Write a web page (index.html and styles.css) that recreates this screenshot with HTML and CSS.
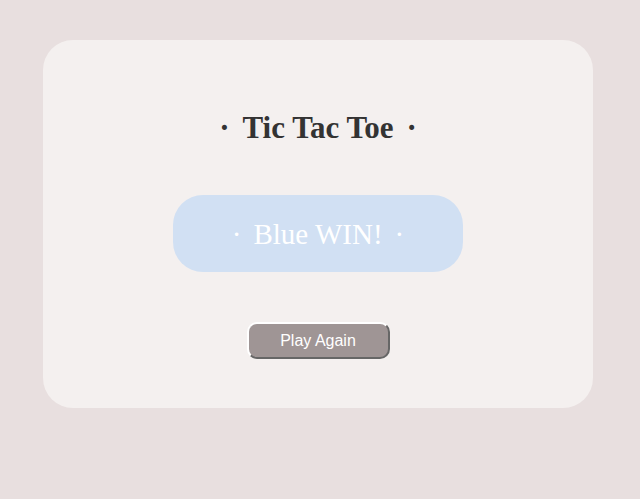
FILE: index.html
```html
<!DOCTYPE html>
<html lang="en">
<head>
    <meta charset="UTF-8">
    <meta name="viewport" content="width=device-width, initial-scale=1.0">
    <title>Tic Tac Toe</title>
    <link rel="stylesheet" href="styles.css">
</head>
<body>
    <div class="container">
        <h1 class="title"><span class="dot">·</span>Tic Tac Toe<span class="dot">·</span></h1>
        <div class="result"><span class="dot">·</span>Blue WIN!<span class="dot">·</span></div>
        <button class="btn" type="button">Play Again</button>
    </div>
</body>
</html>
```

FILE: styles.css
```css
body {
    font-family: "Liberation Serif", "Times New Roman", serif;
    background-color: #e8dfdf;
    margin: 0;
    padding: 40px 0 0 43px;
}

.container {
    width: 550px;
    box-sizing: border-box;
    padding: 70px 0 49px;
    background-color: #f4f0ef;
    border-radius: 30px;
    display: flex;
    flex-direction: column;
    align-items: center;
}

.dot {
    margin: 0 13px;
}

.title {
    margin: 0;
    font-size: 31px;
    line-height: 36px;
    font-weight: bold;
    color: #333;
}

.result {
    margin-top: 49px;
    width: 290px;
    height: 77px;
    border-radius: 30px;
    background-color: #d1e0f3;
    color: #fff;
    font-size: 29px;
    line-height: 36px;
    display: flex;
    align-items: center;
    justify-content: center;
}

.result .dot {
    margin: 0 12px;
}

.btn {
    margin-top: 50px;
    width: 143px;
    height: 37px;
    font-family: "Liberation Sans", Arial, sans-serif;
    font-size: 16px;
    color: #fff;
    background: #9f9595;
    border: 2px solid;
    border-color: #fff #666 #666 #fff;
    border-radius: 10px;
    cursor: pointer;
}
```
